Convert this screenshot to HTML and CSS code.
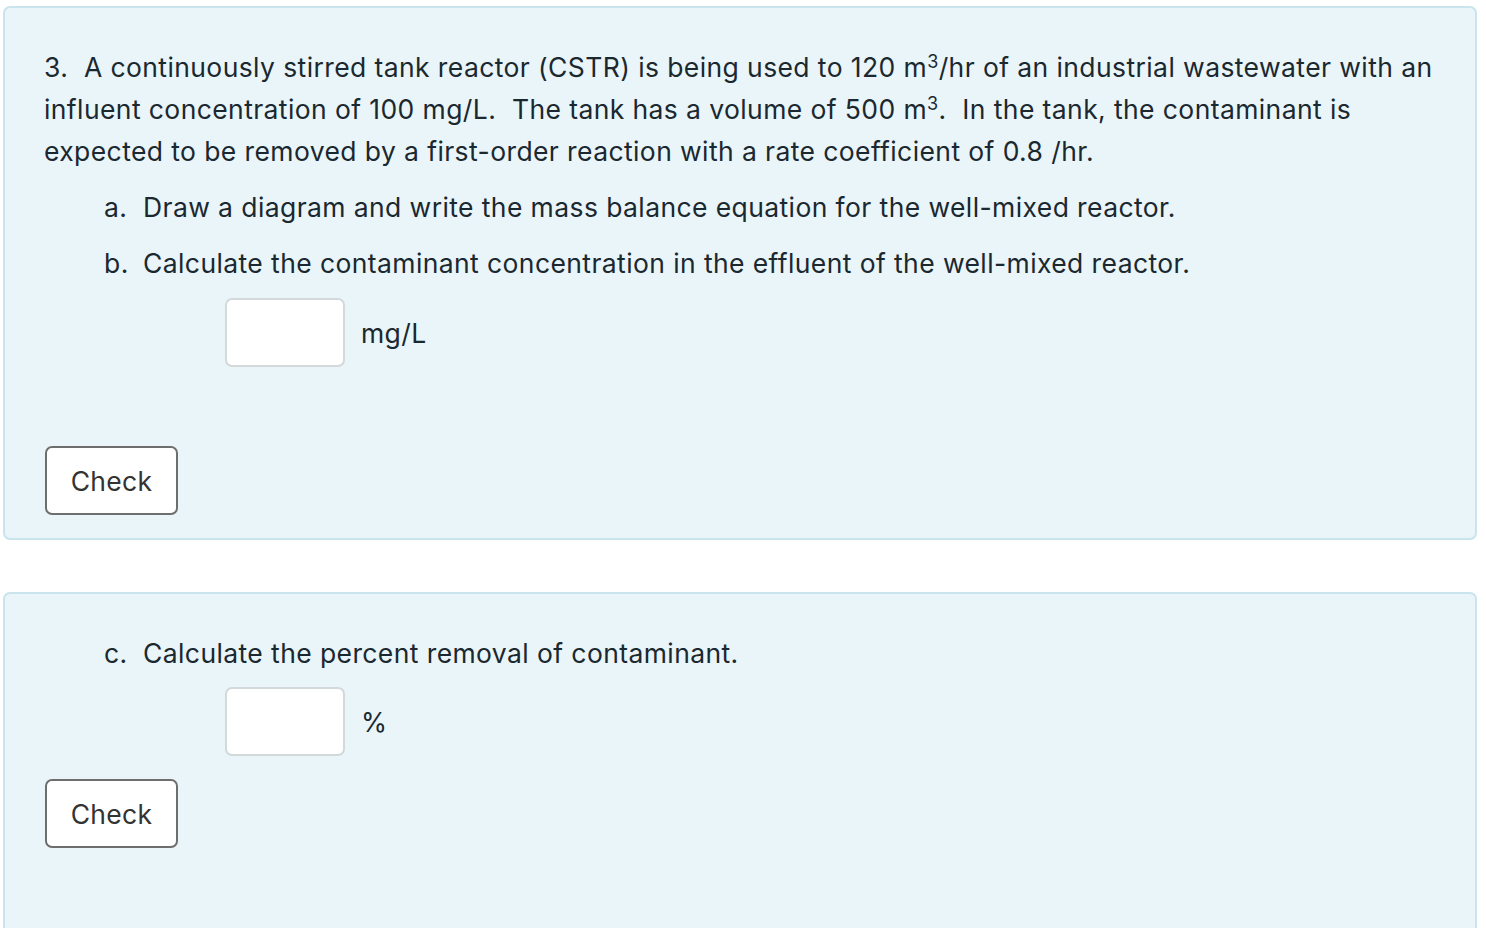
FILE: index.html
```html
<!DOCTYPE html>
<html>
<head>
<meta charset="utf-8">
<link rel="stylesheet" href="styles.css">
</head>
<body>
<div class="page">
  <section class="panel panel-first">
    <p class="question">3.&nbsp; A continuously stirred tank reactor (CSTR) is being used to 120 m<sup>3</sup>/hr of an industrial wastewater with an influent concentration of 100 mg/L.&nbsp; The tank has a volume of 500 m<sup>3</sup>.&nbsp; In the tank, the contaminant is expected to be removed by a first-order reaction with a rate coefficient of 0.8 /hr.</p>
    <ol class="parts">
      <li><span class="marker">a.</span>Draw a diagram and write the mass balance equation for the well-mixed reactor.</li>
      <li><span class="marker">b.</span>Calculate the contaminant concentration in the effluent of the well-mixed reactor.</li>
    </ol>
    <div class="answer"><input class="box" type="text"><span class="unit">mg/L</span></div>
    <button class="check check-first">Check</button>
  </section>
  <section class="panel panel-second">
    <ol class="parts parts-c">
      <li><span class="marker">c.</span>Calculate the percent removal of contaminant.</li>
    </ol>
    <div class="answer answer-c"><input class="box" type="text"><span class="unit">%</span></div>
    <button class="check">Check</button>
  </section>
</div>
</body>
</html>
```

FILE: styles.css
```css
html, body {
  margin: 0;
  padding: 0;
  background: #ffffff;
}
body {
  font-family: "Inter", "Liberation Sans", sans-serif;
  color: #1b2830;
  overflow: hidden;
  height: 928px;
}
.page {
  padding: 6px 9px 0 3px;
  display: flex;
  flex-direction: column;
  gap: 52px;
  height: 928px;
  overflow: hidden;
  box-sizing: border-box;
}
.panel {
  background: #e9f5f8;
  border: 2px solid #c9e4ec;
  border-radius: 7px;
  padding: 38px 30px 24px 39px;
  box-sizing: border-box;
  flex: none;
}
.panel-first {
  height: 534px;
}
.panel-second {
  height: 400px;
  padding-top: 38px;
}
.question {
  margin: 0;
  font-size: 26.5px;
  line-height: 42px;
  letter-spacing: 0.4px;
}
sup {
  font-size: 18px;
  line-height: 0;
  vertical-align: 0;
  position: relative;
  top: -9px;
}
.parts {
  list-style: none;
  margin: 14px 0 0 0;
  padding: 0 0 0 60px;
  display: flex;
  flex-direction: column;
  gap: 14px;
}
.parts li {
  font-size: 26.5px;
  line-height: 42px;
  letter-spacing: 0.4px;
}
.marker {
  display: inline-block;
  width: 39px;
}
.parts-c {
  margin-top: 0;
}
.answer {
  display: flex;
  align-items: center;
  gap: 16px;
  margin: 14px 0 0 181px;
}
.answer-c {
  margin-top: 13px;
}
.box {
  width: 120px;
  height: 69px;
  box-sizing: border-box;
  border: 2px solid #d3d8da;
  border-radius: 7px;
  background: #ffffff;
  margin: 0;
}
.unit {
  font-size: 26.5px;
  line-height: 42px;
  letter-spacing: 0.4px;
}
.check {
  display: block;
  width: 133px;
  height: 69px;
  box-sizing: border-box;
  border: 2px solid #6e6e6e;
  border-radius: 7px;
  background: #ffffff;
  font-family: "Inter", "Liberation Sans", sans-serif;
  font-size: 26.5px;
  letter-spacing: 0.3px;
  color: #333333;
  margin: 23px 0 0 1px;
  padding: 0;
}
.check-first {
  margin-top: 79px;
}
```
